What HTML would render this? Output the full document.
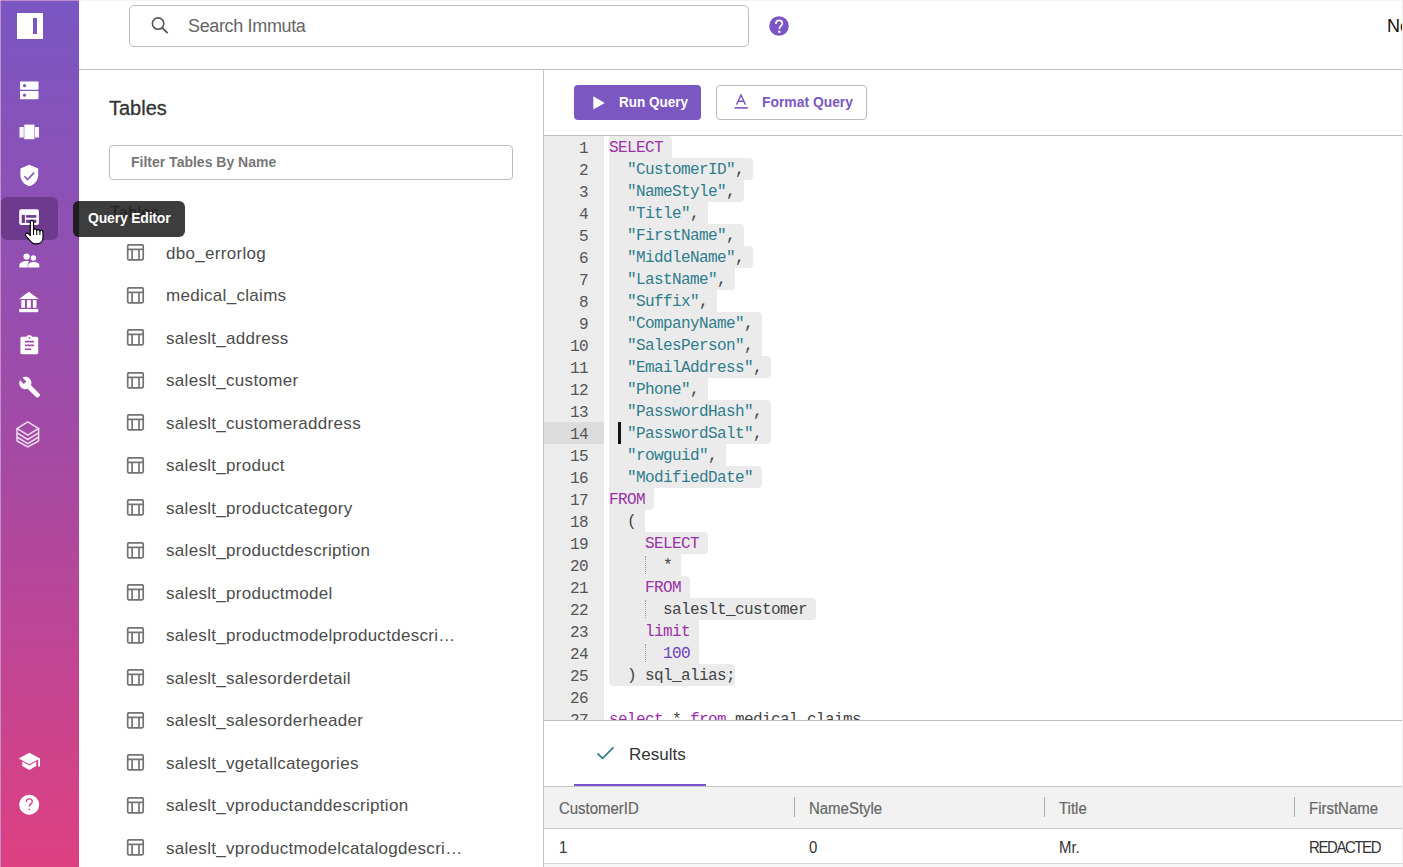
<!DOCTYPE html>
<html><head><meta charset="utf-8">
<style>
*{box-sizing:border-box;margin:0;padding:0}
html,body{width:1403px;height:867px;overflow:hidden;background:#fff;font-family:"Liberation Sans",sans-serif;position:relative}
.abs{position:absolute}
#sb{left:0;top:0;width:79px;height:867px;background:linear-gradient(180deg,#7a56c2 0%,#a24aa6 50%,#de4081 100%)}
#sb .edge{left:0;top:0;width:1px;height:867px;background:#c48ccb}
#sb .topedge{left:0;top:0;width:79px;height:1px;background:rgba(255,190,230,.5)}
.topstrip{left:79px;top:0;width:1324px;height:1px;background:#f4f4f4}
.topbar-line{left:79px;top:69px;width:1324px;height:1px;background:#bdbdbd}
#search{left:129px;top:5px;width:620px;height:42px;border:1px solid #bcbcbc;border-radius:5px;background:#fff}
#search .ph{left:58px;top:10px;font-size:18px;color:#666;white-space:nowrap;letter-spacing:-0.35px}
#search svg{position:absolute;left:20px;top:10px}
.help{left:769px;top:16px;width:20px;height:20px;border-radius:50%;background:#7b55c3;color:#fff;font-size:15px;font-weight:700;text-align:center;line-height:20px}
.no{left:1387px;top:16px;font-size:18px;color:#111;white-space:nowrap}
.rstrip{left:1402px;top:0;width:1px;height:867px;background:#f0f0f0}
.vline{left:543px;top:70px;width:1px;height:797px;background:#c4c4c4}
.tb-line{left:544px;top:135px;width:859px;height:1px;background:#bdbdbd}
#tables-h{left:109px;top:97px;font-size:20px;color:#333;white-space:nowrap;-webkit-text-stroke:0.3px #333}
#filter{left:109px;top:145px;width:404px;height:35px;border:1px solid #bdbdbd;border-radius:4px}
#filter .ph{left:21px;top:8px;font-size:14px;font-weight:700;color:#777;white-space:nowrap}
.sub-tables{left:110px;top:203px;font-size:17px;color:#222;z-index:5}
.item{position:absolute;left:127px;height:20px;width:400px}
.item svg{position:absolute;left:-1px;top:1.5px}
.item span{position:absolute;left:39px;top:1px;font-size:17px;line-height:20px;color:#4c4c4c;letter-spacing:0.3px;white-space:nowrap}
.tooltip{left:73px;top:201px;width:112px;height:36px;border-radius:6px;background:rgba(55,55,55,.97);color:transparent;font-size:14px;font-weight:700;padding-left:15px;line-height:34px;white-space:nowrap;letter-spacing:-0.2px}
.btn-run{left:574px;top:85px;width:127px;height:35px;border-radius:4px;background:#7b57c2}
.btn-run span{position:absolute;left:45px;top:8px;font-size:15px;font-weight:700;color:#fff;white-space:nowrap;transform:scaleX(0.9);transform-origin:0 0}
.btn-fmt{left:716px;top:85px;width:151px;height:35px;border-radius:4px;border:1px solid #bbb;background:#fff}
.btn-fmt span{position:absolute;left:45px;top:7px;font-size:15px;font-weight:700;color:#7b57c2;white-space:nowrap;transform:scaleX(0.925);transform-origin:0 0}
#gutter{left:544px;top:136px;width:60px;height:584px;background:#ececec}
.ln{position:absolute;left:545px;width:43px;padding-top:1.5px;text-align:right;font-family:"Liberation Mono",monospace;font-size:16px;letter-spacing:-0.6px;line-height:22px;color:#555}
.actln{left:544px;top:422px;width:60px;height:22px;background:#dcdcdc}
.sel{position:absolute;left:609px;height:22px;background:#ebebeb}
.guide{position:absolute;left:645px;width:0;height:18px;border-left:1px dotted #999}
.cl{position:absolute;left:609px;padding-top:1px;font-family:"Liberation Mono",monospace;font-size:16px;letter-spacing:-0.6px;line-height:22px;white-space:pre;color:#444}
.kw{color:#9b30a8} .str{color:#2f7d8c} .num{color:#6b40c0} .p{color:#444} .id{color:#444}
.cursor{left:618px;top:422px;width:3px;height:22px;background:#151218}
.edit-line{left:544px;top:720px;width:859px;height:1px;background:#bdbdbd}
.results-tab{left:629px;top:745px;font-size:17px;color:#333;white-space:nowrap}
.tab-ul{left:574px;top:783.5px;width:132px;height:2.5px;background:#7b4fd0}
.hdr{left:544px;top:786px;width:859px;height:43px;background:#f2f2f2;border-top:1px solid #c8c8c8;border-bottom:1px solid #c8c8c8}
.hcell{position:absolute;top:800px;font-size:16px;color:#666;white-space:nowrap;transform:scaleX(0.935);transform-origin:0 0;-webkit-text-stroke:0.2px #666}
.hsep{position:absolute;top:797px;width:1px;height:20px;background:#aaa}
.rcell{position:absolute;top:838.5px;font-size:16px;color:#333;white-space:nowrap;transform:scaleX(0.935);transform-origin:0 0}
.rowline{left:544px;top:863px;width:859px;height:1px;background:#d6d6d6}
.rowbelow{left:544px;top:864px;width:859px;height:3px;background:#f7f7f7}
</style></head>
<body>
<div id="sb" class="abs"><div class="abs edge"></div><div class="abs topedge"></div></div>

<svg class="abs" style="left:0;top:0" width="79" height="867" viewBox="0 0 79 867">
 <!-- logo -->
 <rect x="17" y="13" width="26" height="26" fill="#fff"/>
 <rect x="33" y="18" width="4" height="16" fill="#7a56c2"/>
 <!-- storage -->
 <rect x="20" y="81.5" width="18.5" height="8.3" rx="0.8" fill="#fff"/>
 <rect x="20" y="91" width="18.5" height="8.3" rx="0.8" fill="#fff"/>
 <circle cx="24.5" cy="85.7" r="1.6" fill="#8455bd"/>
 <circle cx="24.5" cy="95.2" r="1.6" fill="#8455bd"/>
 <!-- projects -->
 <rect x="19.5" y="127" width="4.3" height="10.5" fill="#fff" opacity=".95"/>
 <rect x="24.3" y="124.6" width="10.2" height="14.6" fill="#fff"/>
 <rect x="35" y="127" width="4" height="10.5" fill="#fff" opacity=".95"/>
 <!-- shield -->
 <path d="M29.3 164.8 L38.2 168.6 V175 C38.2 180.5 34.5 184.8 29.3 186 C24.1 184.8 20.4 180.5 20.4 175 V168.6 Z" fill="#fff"/>
 <path d="M24.4 176.3 L27.6 179.5 L34.2 172.6" stroke="#8c51b8" stroke-width="1.6" fill="none"/>
 <!-- active bg -->
 <rect x="1" y="197" width="57" height="43" rx="6" fill="#6e3a8d"/>
 <!-- query editor -->
 <rect x="19.2" y="209.3" width="19.7" height="15.8" rx="2" fill="#fff"/>
 <rect x="21.7" y="214.9" width="3.2" height="8" fill="#6e3a8d"/>
 <rect x="26.1" y="215.1" width="10.2" height="2.6" fill="#6e3a8d"/>
 <rect x="26.1" y="219.7" width="10.2" height="3.2" fill="#6e3a8d"/>
 <!-- people -->
 <circle cx="26.6" cy="256.6" r="3.1" fill="#fff"/>
 <circle cx="33.4" cy="258" r="2.7" fill="#fff"/>
 <path d="M19.4 267.5 V265 C19.4 262.5 23.5 261 26.5 261 C27.5 261 28.4 261.1 29.2 261.3 C28.2 262.2 27.8 263.3 27.8 264.5 V267.5 Z" fill="#fff"/>
 <path d="M28.3 267.5 V264.8 C28.3 262.8 31.5 262 33.6 262 C35.8 262 39.3 262.8 39.3 264.8 V267.5 Z" fill="#fff"/>
 <!-- bank -->
 <path d="M19.2 298.9 L28.9 291.8 L38.6 298.9 Z" fill="#fff"/>
 <rect x="21.3" y="300" width="3.6" height="7.8" fill="#fff"/>
 <rect x="27" y="300" width="3.8" height="7.8" fill="#fff"/>
 <rect x="32.9" y="300" width="3.6" height="7.8" fill="#fff"/>
 <rect x="19.2" y="309" width="19" height="3.2" fill="#fff"/>
 <!-- clipboard -->
 <rect x="20.4" y="336.8" width="17.8" height="17.5" rx="1.5" fill="#fff"/>
 <path d="M26.3 337.5 C26.3 335.7 27.7 334.9 29.3 334.9 C30.9 334.9 32.3 335.7 32.3 337.5 Z" fill="#fff"/>
 <circle cx="29.4" cy="337.8" r="0.9" fill="#a049a8"/>
 <path d="M24.9 341.6 H34 M24.9 345.4 H34 M24.9 349.2 H31" stroke="#a049a8" stroke-width="1.6"/>
 <!-- wrench -->
 <path d="M22.5 377.6 L26.3 381.4 L23.8 383.9 L20 380.1 C18.6 382.6 19 385.5 21 387.4 C22.8 389.2 25.4 389.6 27.6 388.7 L36 397.1 C36.7 397.8 37.8 397.8 38.5 397.1 L39.4 396.2 C40.1 395.5 40.1 394.4 39.4 393.7 L31 385.3 C31.9 383.1 31.5 380.5 29.7 378.7 C27.8 376.7 24.9 376.3 22.5 377.6 Z" fill="#fff"/>
 <!-- layers -->
 <g fill="none" stroke="#fff" stroke-width="1.5" opacity=".8">
  <path d="M27.8 421.8 L38.6 428.5 L27.8 435.2 L17 428.5 Z"/>
  <path d="M17 432.8 L27.8 439.5 L38.6 432.8"/>
  <path d="M17 437 L27.8 443.7 L38.6 437"/>
  <path d="M17 441 L27.8 447 L38.6 441"/>
  <path d="M17 428.5 V441 M38.6 428.5 V441"/>
 </g>
 <!-- grad cap -->
 <path d="M18.7 758.5 L29.3 752.8 L40 758.5 L29.3 764.2 Z" fill="#fff"/>
 <path d="M22.3 761.6 V766 L29.3 769.9 L36.3 766 V761.6 L29.3 765.4 Z" fill="#fff"/>
 <rect x="38.2" y="758.5" width="1.8" height="8" fill="#fff"/>
 <!-- help -->
 <circle cx="29.2" cy="804.8" r="10" fill="#fff"/>
 <path d="M26.3 802 C26.3 800.1 27.6 798.9 29.3 798.9 C31 798.9 32.3 800 32.3 801.7 C32.3 803.8 29.3 804 29.3 806.6" stroke="#d8408a" stroke-width="1.4" fill="none"/>
 <circle cx="29.3" cy="809.3" r="0.9" fill="#d8408a"/>
 <!-- cursor -->
 <g transform="translate(23.8,220.2) scale(0.9,0.95)">
  <path d="M7.2 2.2 C7.2 1 8.1 0.2 9 0.2 C10 0.2 10.8 1 10.8 2.2 V10.2 C11.2 9.5 11.9 9.2 12.6 9.2 C13.5 9.2 14.2 9.8 14.4 10.6 C14.8 10.1 15.4 9.8 16.1 9.8 C17 9.8 17.8 10.5 17.9 11.4 C18.3 11 18.8 10.8 19.4 10.8 C20.5 10.8 21.3 11.7 21.3 12.9 V18.2 C21.3 21.8 19 24.8 15 24.8 H12.6 C10.2 24.8 8.9 23.8 7.5 22.2 L2.3 16.5 C1.6 15.7 1.7 14.5 2.5 13.9 C3.3 13.3 4.4 13.4 5.1 14.1 L7.2 16.3 Z" fill="#fff" stroke="#000" stroke-width="1.3" stroke-linejoin="round"/>
  <path d="M10.8 10.2 V15.5 M14.4 10.6 V15.5 M17.9 11.4 V15.5" stroke="#000" stroke-width="1.1"/>
 </g>
</svg>
<div class="abs topstrip"></div>
<div class="abs topbar-line"></div>
<div id="search" class="abs"><svg width="20" height="20" viewBox="0 0 20 20"><circle cx="8.1" cy="7.6" r="5.7" fill="none" stroke="#555" stroke-width="1.6"/><path d="M12.1 11.6 L17.6 17.1" stroke="#555" stroke-width="1.8"/></svg><div class="abs ph">Search Immuta</div></div>
<svg class="abs" style="left:769px;top:16px" width="20" height="20" viewBox="0 0 20 20"><circle cx="10" cy="10" r="9.8" fill="#7b55c3"/><path d="M6.9 8 C6.9 5.5 8.4 4.3 10.1 4.3 C12 4.3 13.3 5.6 13.3 7.4 C13.3 9.6 10.3 10.2 10.3 12.9" stroke="#fff" stroke-width="1.7" fill="none"/><rect x="9.2" y="14.6" width="2.2" height="2.2" fill="#fff"/></svg>
<div class="abs no">No</div>
<div class="abs vline"></div>
<div id="tables-h" class="abs">Tables</div>
<div id="filter" class="abs"><div class="abs ph">Filter Tables By Name</div></div>
<div class="item" style="top:242.5px"><svg width="19" height="18" viewBox="0 0 19 18"><rect x="1.7" y="0.8" width="15.5" height="15" rx="1.2" fill="none" stroke="#737373" stroke-width="1.7"/><path d="M1.7 5.3H17.2M6.1 5.3V15.8M13 5.3V15.8" stroke="#737373" stroke-width="1.7" fill="none"/></svg><span>dbo_errorlog</span></div><div class="item" style="top:285.0px"><svg width="19" height="18" viewBox="0 0 19 18"><rect x="1.7" y="0.8" width="15.5" height="15" rx="1.2" fill="none" stroke="#737373" stroke-width="1.7"/><path d="M1.7 5.3H17.2M6.1 5.3V15.8M13 5.3V15.8" stroke="#737373" stroke-width="1.7" fill="none"/></svg><span>medical_claims</span></div><div class="item" style="top:327.5px"><svg width="19" height="18" viewBox="0 0 19 18"><rect x="1.7" y="0.8" width="15.5" height="15" rx="1.2" fill="none" stroke="#737373" stroke-width="1.7"/><path d="M1.7 5.3H17.2M6.1 5.3V15.8M13 5.3V15.8" stroke="#737373" stroke-width="1.7" fill="none"/></svg><span>saleslt_address</span></div><div class="item" style="top:370.0px"><svg width="19" height="18" viewBox="0 0 19 18"><rect x="1.7" y="0.8" width="15.5" height="15" rx="1.2" fill="none" stroke="#737373" stroke-width="1.7"/><path d="M1.7 5.3H17.2M6.1 5.3V15.8M13 5.3V15.8" stroke="#737373" stroke-width="1.7" fill="none"/></svg><span>saleslt_customer</span></div><div class="item" style="top:412.5px"><svg width="19" height="18" viewBox="0 0 19 18"><rect x="1.7" y="0.8" width="15.5" height="15" rx="1.2" fill="none" stroke="#737373" stroke-width="1.7"/><path d="M1.7 5.3H17.2M6.1 5.3V15.8M13 5.3V15.8" stroke="#737373" stroke-width="1.7" fill="none"/></svg><span>saleslt_customeraddress</span></div><div class="item" style="top:455.0px"><svg width="19" height="18" viewBox="0 0 19 18"><rect x="1.7" y="0.8" width="15.5" height="15" rx="1.2" fill="none" stroke="#737373" stroke-width="1.7"/><path d="M1.7 5.3H17.2M6.1 5.3V15.8M13 5.3V15.8" stroke="#737373" stroke-width="1.7" fill="none"/></svg><span>saleslt_product</span></div><div class="item" style="top:497.5px"><svg width="19" height="18" viewBox="0 0 19 18"><rect x="1.7" y="0.8" width="15.5" height="15" rx="1.2" fill="none" stroke="#737373" stroke-width="1.7"/><path d="M1.7 5.3H17.2M6.1 5.3V15.8M13 5.3V15.8" stroke="#737373" stroke-width="1.7" fill="none"/></svg><span>saleslt_productcategory</span></div><div class="item" style="top:540.0px"><svg width="19" height="18" viewBox="0 0 19 18"><rect x="1.7" y="0.8" width="15.5" height="15" rx="1.2" fill="none" stroke="#737373" stroke-width="1.7"/><path d="M1.7 5.3H17.2M6.1 5.3V15.8M13 5.3V15.8" stroke="#737373" stroke-width="1.7" fill="none"/></svg><span>saleslt_productdescription</span></div><div class="item" style="top:582.5px"><svg width="19" height="18" viewBox="0 0 19 18"><rect x="1.7" y="0.8" width="15.5" height="15" rx="1.2" fill="none" stroke="#737373" stroke-width="1.7"/><path d="M1.7 5.3H17.2M6.1 5.3V15.8M13 5.3V15.8" stroke="#737373" stroke-width="1.7" fill="none"/></svg><span>saleslt_productmodel</span></div><div class="item" style="top:625.0px"><svg width="19" height="18" viewBox="0 0 19 18"><rect x="1.7" y="0.8" width="15.5" height="15" rx="1.2" fill="none" stroke="#737373" stroke-width="1.7"/><path d="M1.7 5.3H17.2M6.1 5.3V15.8M13 5.3V15.8" stroke="#737373" stroke-width="1.7" fill="none"/></svg><span style="letter-spacing:0.29px">saleslt_productmodelproductdescri…</span></div><div class="item" style="top:667.5px"><svg width="19" height="18" viewBox="0 0 19 18"><rect x="1.7" y="0.8" width="15.5" height="15" rx="1.2" fill="none" stroke="#737373" stroke-width="1.7"/><path d="M1.7 5.3H17.2M6.1 5.3V15.8M13 5.3V15.8" stroke="#737373" stroke-width="1.7" fill="none"/></svg><span>saleslt_salesorderdetail</span></div><div class="item" style="top:710.0px"><svg width="19" height="18" viewBox="0 0 19 18"><rect x="1.7" y="0.8" width="15.5" height="15" rx="1.2" fill="none" stroke="#737373" stroke-width="1.7"/><path d="M1.7 5.3H17.2M6.1 5.3V15.8M13 5.3V15.8" stroke="#737373" stroke-width="1.7" fill="none"/></svg><span>saleslt_salesorderheader</span></div><div class="item" style="top:752.5px"><svg width="19" height="18" viewBox="0 0 19 18"><rect x="1.7" y="0.8" width="15.5" height="15" rx="1.2" fill="none" stroke="#737373" stroke-width="1.7"/><path d="M1.7 5.3H17.2M6.1 5.3V15.8M13 5.3V15.8" stroke="#737373" stroke-width="1.7" fill="none"/></svg><span>saleslt_vgetallcategories</span></div><div class="item" style="top:795.0px"><svg width="19" height="18" viewBox="0 0 19 18"><rect x="1.7" y="0.8" width="15.5" height="15" rx="1.2" fill="none" stroke="#737373" stroke-width="1.7"/><path d="M1.7 5.3H17.2M6.1 5.3V15.8M13 5.3V15.8" stroke="#737373" stroke-width="1.7" fill="none"/></svg><span>saleslt_vproductanddescription</span></div><div class="item" style="top:837.5px"><svg width="19" height="18" viewBox="0 0 19 18"><rect x="1.7" y="0.8" width="15.5" height="15" rx="1.2" fill="none" stroke="#737373" stroke-width="1.7"/><path d="M1.7 5.3H17.2M6.1 5.3V15.8M13 5.3V15.8" stroke="#737373" stroke-width="1.7" fill="none"/></svg><span style="letter-spacing:0.29px">saleslt_vproductmodelcatalogdescri…</span></div>
<div class="abs btn-run"><svg class="abs" style="left:19px;top:10.5px" width="12" height="14" viewBox="0 0 12 14"><path d="M0.3 0.3 L11.7 6.9 L0.3 13.6 Z" fill="#fff"/></svg><span>Run Query</span></div>
<div class="abs btn-fmt"><svg class="abs" style="left:17px;top:7.5px" width="16" height="16" viewBox="0 0 16 16"><path d="M2.6 10.6 L7 0.9 L11.4 10.6 M4.3 7.2 H9.7" stroke="#7b57c2" stroke-width="1.4" fill="none"/><rect x="0.5" y="13.1" width="13.3" height="1.6" fill="#7b57c2"/></svg><span>Format Query</span></div>
<div class="abs tb-line"></div>
<div id="gutter" class="abs"></div>
<div class="abs actln"></div>
<div class="ln" style="top:136px">1</div><div class="ln" style="top:158px">2</div><div class="ln" style="top:180px">3</div><div class="ln" style="top:202px">4</div><div class="ln" style="top:224px">5</div><div class="ln" style="top:246px">6</div><div class="ln" style="top:268px">7</div><div class="ln" style="top:290px">8</div><div class="ln" style="top:312px">9</div><div class="ln" style="top:334px">10</div><div class="ln" style="top:356px">11</div><div class="ln" style="top:378px">12</div><div class="ln" style="top:400px">13</div><div class="ln" style="top:422px">14</div><div class="ln" style="top:444px">15</div><div class="ln" style="top:466px">16</div><div class="ln" style="top:488px">17</div><div class="ln" style="top:510px">18</div><div class="ln" style="top:532px">19</div><div class="ln" style="top:554px">20</div><div class="ln" style="top:576px">21</div><div class="ln" style="top:598px">22</div><div class="ln" style="top:620px">23</div><div class="ln" style="top:642px">24</div><div class="ln" style="top:664px">25</div><div class="ln" style="top:686px">26</div><div class="ln" style="top:708px">27</div>
<div class="sel" style="top:136px;width:63px;border-radius:4px 4px 0px 0px"></div><div class="sel" style="top:158px;width:144px;border-radius:0px 4px 4px 0px"></div><div class="sel" style="top:180px;width:135px;border-radius:0px 0px 4px 0px"></div><div class="sel" style="top:202px;width:99px;border-radius:0px 0px 0px 0px"></div><div class="sel" style="top:224px;width:135px;border-radius:0px 4px 0px 0px"></div><div class="sel" style="top:246px;width:144px;border-radius:0px 4px 4px 0px"></div><div class="sel" style="top:268px;width:126px;border-radius:0px 0px 4px 0px"></div><div class="sel" style="top:290px;width:108px;border-radius:0px 0px 0px 0px"></div><div class="sel" style="top:312px;width:153px;border-radius:0px 4px 0px 0px"></div><div class="sel" style="top:334px;width:153px;border-radius:0px 0px 0px 0px"></div><div class="sel" style="top:356px;width:162px;border-radius:0px 4px 4px 0px"></div><div class="sel" style="top:378px;width:99px;border-radius:0px 0px 0px 0px"></div><div class="sel" style="top:400px;width:162px;border-radius:0px 4px 0px 0px"></div><div class="sel" style="top:422px;width:162px;border-radius:0px 0px 4px 0px"></div><div class="sel" style="top:444px;width:117px;border-radius:0px 0px 0px 0px"></div><div class="sel" style="top:466px;width:153px;border-radius:0px 4px 4px 0px"></div><div class="sel" style="top:488px;width:45px;border-radius:0px 0px 4px 0px"></div><div class="sel" style="top:510px;width:36px;border-radius:0px 0px 0px 0px"></div><div class="sel" style="top:532px;width:99px;border-radius:0px 4px 4px 0px"></div><div class="sel" style="top:554px;width:72px;border-radius:0px 0px 0px 0px"></div><div class="sel" style="top:576px;width:81px;border-radius:0px 4px 0px 0px"></div><div class="sel" style="top:598px;width:207px;border-radius:0px 4px 4px 0px"></div><div class="sel" style="top:620px;width:90px;border-radius:0px 0px 0px 0px"></div><div class="sel" style="top:642px;width:90px;border-radius:0px 0px 0px 0px"></div><div class="sel" style="top:664px;width:126px;border-radius:0px 4px 4px 4px"></div>
<div class="guide" style="top:556px"></div><div class="guide" style="top:600px"></div><div class="guide" style="top:644px"></div>
<div class="cl" style="top:136px"><span class="kw">SELECT</span></div><div class="cl" style="top:158px"><span class="sp">  </span><span class="str">&quot;CustomerID&quot;</span><span class="p">,</span></div><div class="cl" style="top:180px"><span class="sp">  </span><span class="str">&quot;NameStyle&quot;</span><span class="p">,</span></div><div class="cl" style="top:202px"><span class="sp">  </span><span class="str">&quot;Title&quot;</span><span class="p">,</span></div><div class="cl" style="top:224px"><span class="sp">  </span><span class="str">&quot;FirstName&quot;</span><span class="p">,</span></div><div class="cl" style="top:246px"><span class="sp">  </span><span class="str">&quot;MiddleName&quot;</span><span class="p">,</span></div><div class="cl" style="top:268px"><span class="sp">  </span><span class="str">&quot;LastName&quot;</span><span class="p">,</span></div><div class="cl" style="top:290px"><span class="sp">  </span><span class="str">&quot;Suffix&quot;</span><span class="p">,</span></div><div class="cl" style="top:312px"><span class="sp">  </span><span class="str">&quot;CompanyName&quot;</span><span class="p">,</span></div><div class="cl" style="top:334px"><span class="sp">  </span><span class="str">&quot;SalesPerson&quot;</span><span class="p">,</span></div><div class="cl" style="top:356px"><span class="sp">  </span><span class="str">&quot;EmailAddress&quot;</span><span class="p">,</span></div><div class="cl" style="top:378px"><span class="sp">  </span><span class="str">&quot;Phone&quot;</span><span class="p">,</span></div><div class="cl" style="top:400px"><span class="sp">  </span><span class="str">&quot;PasswordHash&quot;</span><span class="p">,</span></div><div class="cl" style="top:422px"><span class="sp">  </span><span class="str">&quot;PasswordSalt&quot;</span><span class="p">,</span></div><div class="cl" style="top:444px"><span class="sp">  </span><span class="str">&quot;rowguid&quot;</span><span class="p">,</span></div><div class="cl" style="top:466px"><span class="sp">  </span><span class="str">&quot;ModifiedDate&quot;</span></div><div class="cl" style="top:488px"><span class="kw">FROM</span></div><div class="cl" style="top:510px"><span class="sp">  </span><span class="p">(</span></div><div class="cl" style="top:532px"><span class="sp">    </span><span class="kw">SELECT</span></div><div class="cl" style="top:554px"><span class="sp">      </span><span class="p">*</span></div><div class="cl" style="top:576px"><span class="sp">    </span><span class="kw">FROM</span></div><div class="cl" style="top:598px"><span class="sp">      </span><span class="id">saleslt_customer</span></div><div class="cl" style="top:620px"><span class="sp">    </span><span class="kw">limit</span></div><div class="cl" style="top:642px"><span class="sp">      </span><span class="num">100</span></div><div class="cl" style="top:664px"><span class="sp">  </span><span class="p">) sql_alias;</span></div><div class="cl" style="top:686px"></div><div class="cl" style="top:708px"><span class="kw">select</span><span class="p"> * </span><span class="kw">from</span><span class="id"> medical_claims</span></div>
<div class="abs cursor"></div>
<div class="abs" style="left:544px;top:721px;width:859px;height:146px;background:#fff"></div>
<div class="abs edit-line"></div>
<svg class="abs" style="left:595px;top:744px" width="22" height="18" viewBox="0 0 22 18"><path d="M2.5 9.5 L7.6 14.3 L18.4 3.3" stroke="#34808f" stroke-width="1.8" fill="none"/></svg>
<div class="abs results-tab">Results</div>
<div class="abs tab-ul"></div>
<div class="abs hdr"></div>
<div class="hcell" style="left:559px">CustomerID</div>
<div class="hsep" style="left:794px"></div>
<div class="hcell" style="left:809px">NameStyle</div>
<div class="hsep" style="left:1044px"></div>
<div class="hcell" style="left:1059px">Title</div>
<div class="hsep" style="left:1294px"></div>
<div class="hcell" style="left:1309px">FirstName</div>
<div class="rcell" style="left:559px">1</div>
<div class="rcell" style="left:809px">0</div>
<div class="rcell" style="left:1059px">Mr.</div>
<div class="rcell" style="left:1309px;letter-spacing:-1.5px">REDACTED</div>
<div class="abs rowline"></div>
<div class="abs rowbelow"></div>
<div class="abs tooltip">Query Editor</div>
<div class="abs" style="left:73px;top:201px;width:6px;height:36px;background:#1e1e1e;border-radius:6px 0 0 6px"></div>
<div class="abs sub-tables">Tables</div>
<div class="abs" style="left:88px;top:201px;width:96px;height:36px;color:#fff;font-size:14px;font-weight:700;line-height:34px;letter-spacing:-0.2px;z-index:6">Query Editor</div>
<div class="abs rstrip"></div>
</body></html>
